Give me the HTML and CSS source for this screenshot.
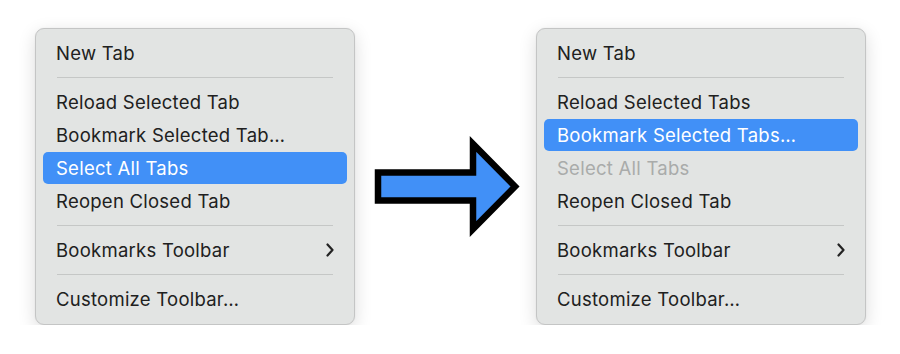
FILE: index.html
```html
<!DOCTYPE html>
<html lang="en">
<head>
    <meta charset="UTF-8">
    <meta name="viewport" content="width=device-width, initial-scale=1.0">
    <title>Tab context menu</title>
    <link rel="stylesheet" href="styles.css">
</head>
<body>
    <div class="stage">
        <!-- before: one tab selected -->
        <div class="menu menu-before">
            <div class="item">New Tab</div>
            <div class="sep"></div>
            <div class="item">Reload Selected Tab</div>
            <div class="item">Bookmark Selected Tab…</div>
            <div class="item active">Select All Tabs</div>
            <div class="item">Reopen Closed Tab</div>
            <div class="sep"></div>
            <div class="item">
                <span>Bookmarks Toolbar</span>
                <svg class="chevron" width="10" height="14" viewBox="0 0 10 14">
                    <path d="M2.5 1.5 L7.5 7 L2.5 12.5" fill="none" stroke="#232323" stroke-width="2.2" stroke-linecap="round" stroke-linejoin="round"/>
                </svg>
            </div>
            <div class="sep"></div>
            <div class="item">Customize Toolbar…</div>
        </div>

        <svg class="arrow" width="150" height="110" viewBox="0 0 150 110">
            <polygon points="6,40.5 101,40.5 101,12 143,54.5 101,97 101,68.5 6,68.5" fill="#4190f7" stroke="#000" stroke-width="6.5" stroke-linejoin="miter"/>
        </svg>

        <!-- after: all tabs selected -->
        <div class="menu menu-after">
            <div class="item">New Tab</div>
            <div class="sep"></div>
            <div class="item">Reload Selected Tabs</div>
            <div class="item active">Bookmark Selected Tabs…</div>
            <div class="item disabled">Select All Tabs</div>
            <div class="item">Reopen Closed Tab</div>
            <div class="sep"></div>
            <div class="item">
                <span>Bookmarks Toolbar</span>
                <svg class="chevron" width="10" height="14" viewBox="0 0 10 14">
                    <path d="M2.5 1.5 L7.5 7 L2.5 12.5" fill="none" stroke="#232323" stroke-width="2.2" stroke-linecap="round" stroke-linejoin="round"/>
                </svg>
            </div>
            <div class="sep"></div>
            <div class="item">Customize Toolbar…</div>
        </div>
    </div>
</body>
</html>
```

FILE: styles.css
```css
body {
    margin: 0;
    background: #fff;
    font-family: Inter, "Noto Sans", Arial, sans-serif;
}
.stage {
    display: flex;
    align-items: flex-start;
    padding: 28px 0 0 35px;
}
.menu {
    box-sizing: border-box;
    height: 297px;
    padding: 8px 7px;
    display: flex;
    flex-direction: column;
    background: #e2e4e3;
    border: 1px solid #c4c5c5;
    border-radius: 9px;
    box-shadow: 0 5px 18px rgba(0,0,0,0.14), 0 0 2px rgba(0,0,0,0.06);
}
.menu-before { width: 320px; }
.menu-after { width: 330px; margin-left: 14px; }
.arrow {
    margin: 104px 0 0 17px;
}
.item {
    flex: none;
    height: 32px;
    margin-bottom: 1px;
    padding: 0 13px;
    display: flex;
    align-items: center;
    justify-content: space-between;
    font-size: 18.5px;
    color: #202020;
    border-radius: 5px;
    letter-spacing: 0.25px;
}
.item.active {
    background: #4190f7;
    color: #fff;
}
.item.disabled {
    color: #a9abaa;
}
.chevron {
    margin-right: -1px;
}
.sep {
    flex: none;
    height: 1px;
    margin: 7px 14px 8px;
    background: #c5c7c6;
}
```
